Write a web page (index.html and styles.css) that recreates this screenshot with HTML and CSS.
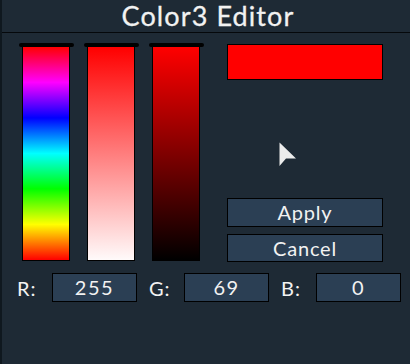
FILE: index.html
```html
<!DOCTYPE html>
<html>
<head>
<meta charset="utf-8">
<link rel="stylesheet" href="styles.css">
</head>
<body>
<div class="screen">
  <div class="edge"></div>
  <div class="window">
    <div class="title">Color3 Editor</div>
    <div class="content">
      <div class="bars">
        <div class="slider"><div class="cap"></div><div class="bar hue"></div></div>
        <div class="slider"><div class="cap"></div><div class="bar sat"></div></div>
        <div class="slider"><div class="cap"></div><div class="bar val"></div></div>
      </div>
      <div class="side">
        <div class="swatch"></div>
        <div class="spacer"></div>
        <div class="btn">Apply</div>
        <div class="btn cancel">Cancel</div>
      </div>
    </div>
    <div class="inputs">
      <div class="field"><span class="lbl">R:</span><span class="box">255</span></div>
      <div class="field"><span class="lbl">G:</span><span class="box">69</span></div>
      <div class="field"><span class="lbl">B:</span><span class="box">0</span></div>
    </div>
  </div>
  <svg class="cursor" width="18" height="25" viewBox="0 0 18 25">
    <polygon points="0.5,0.5 17,16.5 7,16.5 0.5,24" fill="#ececec"/>
  </svg>
</div>
</body>
</html>
```
FILE: styles.css
```css
html, body {
  margin: 0;
  padding: 0;
  background: #1e2a35;
}
.screen {
  position: relative;
  width: 410px;
  height: 364px;
  display: flex;
  overflow: hidden;
  font-family: Lato, "Noto Sans", sans-serif;
  color: #f2f2f2;
}
.edge {
  width: 2px;
  background: #0f181f;
  flex: none;
}
.window {
  flex: 1;
  background: #1e2a35;
  display: flex;
  flex-direction: column;
}
.title {
  height: 33px;
  border-bottom: 1px solid #05080b;
  font-size: 27px;
  line-height: 32px;
  letter-spacing: 1.1px;
  text-align: center;
  padding-left: 4px;
  -webkit-text-stroke: 0.3px #f2f2f2;
  box-sizing: border-box;
}
.content {
  display: flex;
  padding: 10px 0 0 17px;
}
.bars {
  display: flex;
  gap: 10px;
}
.slider {
  width: 55px;
  display: flex;
  flex-direction: column;
}
.cap {
  height: 4px;
  background: #000;
  border-radius: 2px;
}
.bar {
  width: 46px;
  height: 213px;
  margin-left: 3px;
  border: 1px solid #000;
  border-top: none;
}
.hue {
  background: linear-gradient(to bottom, #ff0000 0%, #ff00ff 16.6%, #0000ff 33.3%, #00ffff 50%, #00ff00 66.6%, #ffff00 83.3%, #ff0000 100%);
}
.sat {
  background: linear-gradient(to bottom, #ff0000, #fffafa);
}
.val {
  background: linear-gradient(to bottom, #ff0000, #000000);
}
.side {
  margin-left: 23px;
  width: 156px;
  display: flex;
  flex-direction: column;
  padding-top: 1px;
}
.swatch {
  height: 34px;
  background: #ff0000;
  border: 1px solid #000;
}
.spacer {
  height: 118px;
}
.btn {
  height: 27px;
  border: 1px solid #000;
  background: #2b3f54;
  font-size: 20px;
  line-height: 27px;
  text-align: center;
  letter-spacing: 0.8px;
}
.cancel {
  margin-top: 7px;
  height: 26px;
  line-height: 26px;
}
.inputs {
  display: flex;
  gap: 12px;
  padding: 11px 0 0 15px;
}
.field {
  display: flex;
  align-items: center;
}
.lbl {
  width: 35px;
  font-size: 20px;
  letter-spacing: 1px;
}
.box {
  width: 83px;
  height: 27px;
  border: 1px solid #000;
  background: #2b3f54;
  font-size: 20px;
  line-height: 27px;
  text-align: center;
  letter-spacing: 1.5px;
}
.cursor {
  position: absolute;
  left: 279px;
  top: 142px;
}
```
